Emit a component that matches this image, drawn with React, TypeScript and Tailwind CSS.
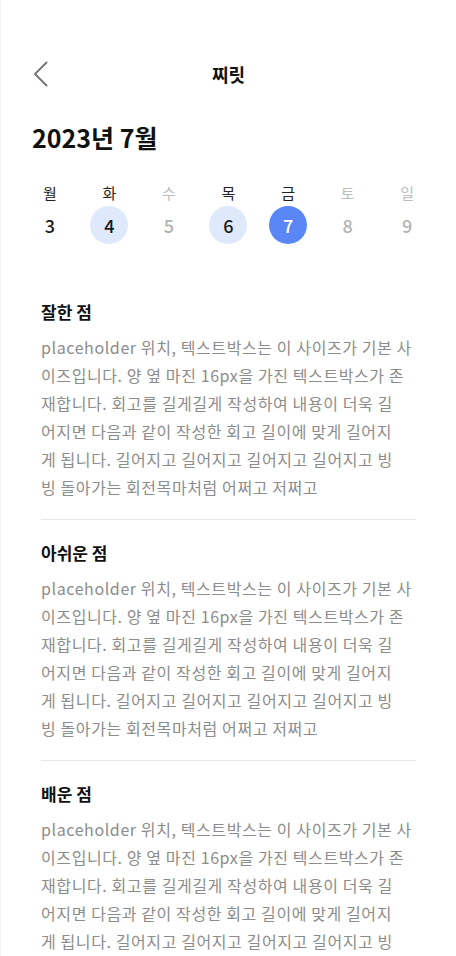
import React from 'react';

type Day = {
  label: string;
  date: number;
  state: 'normal' | 'muted' | 'written' | 'selected';
};

const days: Day[] = [
  { label: '월', date: 3, state: 'normal' },
  { label: '화', date: 4, state: 'written' },
  { label: '수', date: 5, state: 'muted' },
  { label: '목', date: 6, state: 'written' },
  { label: '금', date: 7, state: 'selected' },
  { label: '토', date: 8, state: 'muted' },
  { label: '일', date: 9, state: 'muted' },
];

// placeholder copy, kept in the same line breaks as the design mock
const bodyLines = [
  'placeholder 위치, 텍스트박스는 이 사이즈가 기본 사',
  '이즈입니다. 양 옆 마진 16px을 가진 텍스트박스가 존',
  '재합니다. 회고를 길게길게 작성하여 내용이 더욱 길',
  '어지면 다음과 같이 작성한 회고 길이에 맞게 길어지',
  '게 됩니다. 길어지고 길어지고 길어지고 길어지고 빙',
  '빙 돌아가는 회전목마처럼 어쩌고 저쩌고',
];

const sections = [
  { title: '잘한 점', lines: bodyLines },
  { title: '아쉬운 점', lines: bodyLines },
  { title: '배운 점', lines: bodyLines },
];

function BackIcon() {
  return (
    <svg width="16" height="26" viewBox="0 0 16 26" fill="none">
      <path d="M13.5 1.5L2 13l11.5 11.5" stroke="#777777" strokeWidth="2" strokeLinecap="round" strokeLinejoin="round" />
    </svg>
  );
}

function DayCell({ day }: { day: Day }) {
  const muted = day.state === 'muted';
  const circle =
    day.state === 'selected'
      ? 'bg-[#5b87f6] text-white'
      : day.state === 'written'
        ? 'bg-[#dfe9fc] text-[#1a1a1a]'
        : muted
          ? 'text-[#b3b3b3]'
          : 'text-[#1a1a1a]';

  return (
    <div className="flex flex-col items-center">
      <span className={`text-[15px] leading-5 ${muted ? 'text-[#bdbdbd]' : 'text-[#222222]'}`}>{day.label}</span>
      <span className={`mt-[3px] flex size-[38px] items-center justify-center rounded-full text-[18px] font-medium ${circle}`}>
        {day.date}
      </span>
    </div>
  );
}

export default function App() {
  return (
    <div className="min-h-screen border-l border-[#f3f3f3] bg-white pt-[46px] font-['Noto_Sans_CJK_KR','Noto_Sans',sans-serif] text-[#111111]">
      <header className="grid h-14 grid-cols-[1fr_auto_1fr] items-center px-[32px]">
        <button className="flex items-center">
          <BackIcon />
        </button>
        <h1 className="text-[18px] font-bold">찌릿</h1>
        <div />
      </header>

      <h2 className="mt-[17px] px-[31px] text-[25px] font-bold leading-[36px]">2023년 7월</h2>

      <div className="mt-[28px] grid grid-cols-7 px-[19px]">
        {days.map((d) => (
          <DayCell key={d.date} day={d} />
        ))}
      </div>

      <div className="mt-[55px] px-10">
        {sections.map((s, i) => (
          <section key={s.title} className={i > 0 ? 'mt-[20px]' : ''}>
            <h3 className="text-[17px] font-bold leading-[26px]">{s.title}</h3>
            <p className="mt-[8px] text-[16px] leading-[28px] tracking-[0.6px] whitespace-nowrap text-[#8c8c8c]">
              {s.lines.map((line) => (
                <span key={line} className="block">
                  {line}
                </span>
              ))}
            </p>
            <div className="mt-[18px] border-t border-[#e6e6e6]" />
          </section>
        ))}
      </div>
    </div>
  );
}
